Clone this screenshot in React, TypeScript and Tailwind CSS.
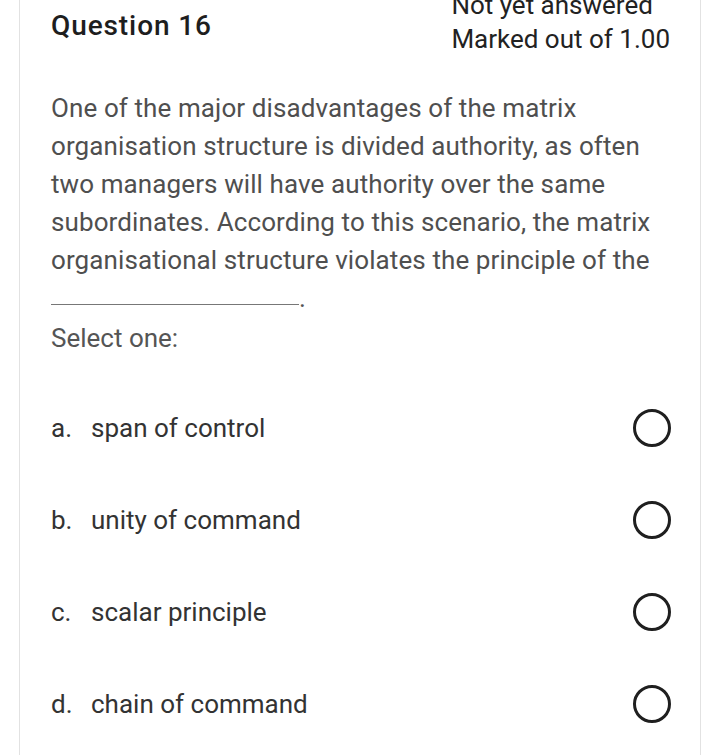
import React from "react";

const options = [
  { l: "a.", t: "span of control" },
  { l: "b.", t: "unity of command" },
  { l: "c.", t: "scalar principle" },
  { l: "d.", t: "chain of command" },
];

export default function App() {
  return (
    <div className="w-[720px] h-[755px] overflow-hidden bg-white px-[19px]" style={{ fontFamily: "Roboto, 'Noto Sans', sans-serif" }}>
      <div className="h-full border-x border-[#e2e2e2] pl-[31px] pr-[30px]">
        <div className="flex justify-between items-start">
          <div className="mt-[9px] text-[28px] leading-[34px] font-medium tracking-[0.9px] text-[#1e1e1e]">Question 16</div>
          <div className="-mt-[12px] text-[26px] leading-[34px] text-[#222]">
            <div>Not yet answered</div>
            <div>Marked out of 1.00</div>
          </div>
        </div>
        <div className="mt-[33px] text-[26px] leading-[38px] text-[#4f4f4f] whitespace-nowrap tracking-[0.1px]">
          One of the major disadvantages of the matrix<br />
          organisation structure is divided authority, as often<br />
          two managers will have authority over the same<br />
          subordinates. According to this scenario, the matrix<br />
          organisational structure violates the principle of the
        </div>
        <div className="text-[26px] leading-[38px] text-[#555]">
          <span className="inline-block w-[248px] border-b-[1.5px] border-[#777] h-[26px] align-top"></span>
          <span>.</span>
        </div>
        <div className="mt-[2px] text-[26px] leading-[38px] text-[#555]">Select one:</div>
        <div className="mt-[25px]">
          {options.map((o) => (
            <div key={o.l} className="flex items-center h-[92px] text-[26px] text-[#333]">
              <span className="w-[40px]">{o.l}</span>
              <span className="flex-1">{o.t}</span>
              <span className="w-[38px] h-[38px] rounded-full border-[3px] border-[#1f1f1f] -mr-[1px]"></span>
            </div>
          ))}
        </div>
      </div>
    </div>
  );
}
